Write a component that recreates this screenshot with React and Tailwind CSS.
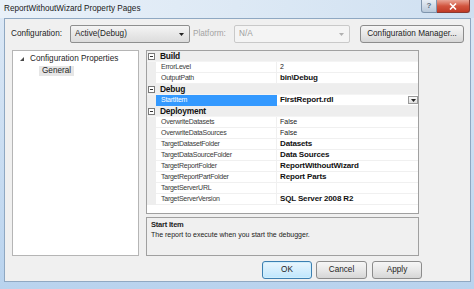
import { useState } from 'react';

// Propriétés affichées dans la grille
const sections = [
  {
    name: 'Build',
    rows: [
      { key: 'ErrorLevel', value: '2' },
      { key: 'OutputPath', value: 'bin\\Debug', bold: true },
    ],
  },
  {
    name: 'Debug',
    rows: [{ key: 'StartItem', value: 'FirstReport.rdl', bold: true, combo: true }],
  },
  {
    name: 'Deployment',
    rows: [
      { key: 'OverwriteDatasets', value: 'False' },
      { key: 'OverwriteDataSources', value: 'False' },
      { key: 'TargetDatasetFolder', value: 'Datasets', bold: true },
      { key: 'TargetDataSourceFolder', value: 'Data Sources', bold: true },
      { key: 'TargetReportFolder', value: 'ReportWithoutWizard', bold: true },
      { key: 'TargetReportPartFolder', value: 'Report Parts', bold: true },
      { key: 'TargetServerURL', value: '' },
      { key: 'TargetServerVersion', value: 'SQL Server 2008 R2', bold: true },
    ],
  },
];

function ComboArrow({ className = '' }) {
  return (
    <svg width="5" height="3" viewBox="0 0 5 3" className={className}>
      <path d="M0 0h5L2.5 3z" fill="currentColor" />
    </svg>
  );
}

function Button({ children, primary = false, className = '' }) {
  return (
    <button
      className={`h-[18px] rounded-[3px] border text-[8.2px] text-[#1e1e1e] ${
        primary
          ? 'border-[#3c7fb1] bg-gradient-to-b from-[#eaf6fd] to-[#bee6fd] shadow-[inset_0_0_0_1px_#cfeefc]'
          : 'border-[#8c8c8c] bg-gradient-to-b from-[#f6f6f6] via-[#e8e8e8] to-[#d6d6d6]'
      } ${className}`}
    >
      {children}
    </button>
  );
}

function CategoryRow({ name }) {
  return (
    <div className="h-[11px] flex items-center bg-[#eeeeee] border-b border-[#f4f4f4]">
      <div className="w-[9px] flex justify-center">
        <div className="w-[7px] h-[7px] border border-[#7a7a7a] bg-white flex items-center justify-center">
          <div className="w-[3px] h-px bg-[#333]" />
        </div>
      </div>
      <span className="pl-[4px] text-[8.4px] font-bold tracking-[-0.2px] text-[#111]">{name}</span>
    </div>
  );
}

function PropRow({ row, selected }) {
  return (
    <div className="h-[11px] flex">
      <div className="w-[9px] bg-[#eeeeee]" />
      <div
        className={`w-[121px] flex items-center pl-[5px] text-[7px] tracking-[-0.25px] border-b border-r ${
          selected ? 'bg-[#3399ff] text-white border-[#3399ff]' : 'text-[#3a3a3a] border-[#f0f0f0]'
        }`}
      >
        {row.key}
      </div>
      <div className="flex-1 flex items-center pl-[3px] border-b border-[#f0f0f0]">
        <span
          className={
            row.bold
              ? 'text-[8px] font-bold tracking-[-0.15px] text-[#111]'
              : 'text-[7px] text-[#222]'
          }
        >
          {row.value}
        </span>
        {row.combo && (
          <div className="ml-auto w-[10px] h-[8px] border border-[#9a9a9a] bg-gradient-to-b from-[#fafafa] to-[#dedede] flex items-center justify-center text-[#222]">
            <ComboArrow />
          </div>
        )}
      </div>
    </div>
  );
}

export default function App() {
  const [selected] = useState('StartItem');

  return (
    <div className="w-[474px] h-[289px] overflow-hidden flex flex-col bg-gradient-to-b from-[#dde9f6] to-[#b9d3ee] font-['Liberation_Sans',Arial,sans-serif] text-[#1e1e1e]">
      {/* ── Barre de titre ── */}
      <div className="h-[18px] flex items-start bg-gradient-to-r from-[#e9f1f9] via-[#dde9f5] to-[#cfe0f1]">
        <span className="pl-[4px] pt-[3px] text-[8.2px] text-[#1b1b1b] leading-[11px]">
          ReportWithoutWizard Property Pages
        </span>
        <div className="ml-auto mr-[4px] flex">
          <div className="w-[16px] h-[13px] rounded-bl-[3px] border border-t-0 border-[#7f95ad] bg-gradient-to-b from-[#e8eef5] to-[#b9c9da] flex items-center justify-center text-[8px] font-bold text-[#5a6b80]">
            ?
          </div>
          <div className="w-[33px] h-[13px] rounded-br-[3px] border border-t-0 border-l-0 border-[#8a3a32] bg-gradient-to-b from-[#e8a597] via-[#d2553f] to-[#c03a26] flex items-center justify-center">
            <svg width="8" height="7" viewBox="0 0 8 7">
              <path d="M1 0.5l6 6M7 0.5l-6 6" stroke="white" strokeWidth="1.6" />
            </svg>
          </div>
        </div>
      </div>

      {/* ── Zone cliente ── */}
      <div className="ml-[4px] mr-[3px] h-[264px] border border-[#8fa8c2] bg-[#f0f0f0] flex flex-col">
        {/* Configuration / Platform */}
        <div className="mt-[6px] pl-[6px] h-[18px] flex items-center text-[8.2px]">
          <span className="w-[59px]">Configuration:</span>
          <div className="w-[120px] h-[18px] border border-[#8e8f8f] rounded-[2px] bg-gradient-to-b from-[#f4f4f4] to-[#dcdcdc] flex items-center pl-[4px] pr-[5px]">
            <span>Active(Debug)</span>
            <ComboArrow className="ml-auto text-[#222]" />
          </div>
          <span className="ml-[3px] w-[41px] text-[#a3a3a3]">Platform:</span>
          <div className="w-[116px] h-[18px] border border-[#c9c9c9] rounded-[2px] bg-[#f4f4f4] flex items-center pl-[4px] pr-[5px] text-[#9c9c9c]">
            <span>N/A</span>
            <ComboArrow className="ml-auto text-[#b0b0b0]" />
          </div>
          <Button className="ml-[10px] w-[104px] h-[17px]">Configuration Manager...</Button>
        </div>

        {/* Arbre + grille */}
        <div className="mt-[7px] h-[206px] flex">
          <div className="ml-[7px] w-[127px] h-full border border-[#b5b5b5] bg-white pt-[2px] text-[8.2px]">
            <div className="h-[12px] flex items-center pl-[7px]">
              <svg width="4" height="4" viewBox="0 0 4 4" className="mr-[6px]">
                <path d="M4 0v4H0z" fill="#4a4a4a" />
              </svg>
              <span>Configuration Properties</span>
            </div>
            <div className="h-[12px] flex items-center pl-[26px]">
              <span className="px-[3px] h-[10px] leading-[10px] bg-[#e6e6e6]">General</span>
            </div>
          </div>

          <div className="ml-[7px] w-[273px] flex flex-col">
            <div className="h-[164px] border border-[#a0a0a0] bg-white">
              {sections.map((s) => (
                <div key={s.name}>
                  <CategoryRow name={s.name} />
                  {s.rows.map((r) => (
                    <PropRow key={r.key} row={r} selected={r.key === selected} />
                  ))}
                </div>
              ))}
            </div>
            <div className="mt-[3px] h-[39px] border border-[#a0a0a0] bg-[#f0f0f0] pl-[4px] pt-[2px]">
              <div className="text-[7.5px] font-bold tracking-[-0.2px] leading-[10px]">Start Item</div>
              <div className="text-[7px] leading-[10px] text-[#222]">
                The report to execute when you start the debugger.
              </div>
            </div>
          </div>
        </div>

        {/* Boutons */}
        <div className="mt-[5px] flex justify-end mr-[48px]">
          <Button primary className="w-[50px]">OK</Button>
          <Button className="ml-[4px] w-[51px]">Cancel</Button>
          <Button className="ml-[5px] w-[50px]">Apply</Button>
        </div>
      </div>
    </div>
  );
}
